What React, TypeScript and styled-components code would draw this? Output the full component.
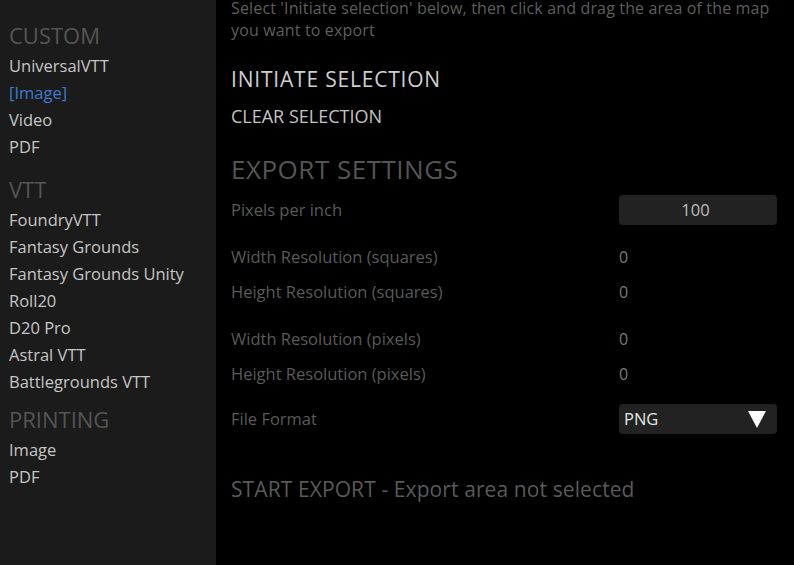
import * as React from "react";
import styled, { createGlobalStyle } from "styled-components";

const GlobalStyle = createGlobalStyle`
  html, body {
    margin: 0;
    padding: 0;
    background: #000;
  }
  body {
    font-family: "Open Sans", "Liberation Sans", sans-serif;
    overflow: hidden;
  }
`;

const Wrapper = styled.div`
  display: flex;
  width: 794px;
  height: 565px;
  overflow: hidden;
  background: #000;
`;

const Sidebar = styled.nav`
  width: 216px;
  flex: 0 0 216px;
  background: #1b1b1b;
  padding: 20px 0 0 9px;
  box-sizing: border-box;
`;

const GroupTitle = styled.div<{ $gap?: number }>`
  font-size: 22px;
  line-height: 31px;
  color: #555;
  margin-top: ${(p) => p.$gap ?? 0}px;
  padding-bottom: 1px;
`;

const NavItem = styled.div<{ $active?: boolean }>`
  font-size: 16.5px;
  line-height: 27px;
  color: ${(p) => (p.$active ? "#3a7bd0" : "#c6c6c6")};
`;

const Main = styled.main`
  flex: 1;
  padding: 0 17px 0 15px;
  display: flex;
  flex-direction: column;
`;

const Intro = styled.p`
  margin: -3px 0 0;
  font-size: 16px;
  line-height: 22px;
  letter-spacing: 0.15px;
  color: #5e5e5e;
`;

const ActionBig = styled.div`
  margin-top: 24px;
  font-size: 21px;
  line-height: 28px;
  letter-spacing: 0.8px;
  color: #cfcfcf;
`;

const ActionSmall = styled.div`
  margin-top: 11px;
  font-size: 18px;
  line-height: 24px;
  color: #c4c4c4;
`;

const SectionTitle = styled.h2`
  margin: 24px 0 6px;
  font-weight: 400;
  font-size: 26px;
  line-height: 34px;
  letter-spacing: 0.5px;
  color: #555;
`;

const SettingGroup = styled.div<{ $gap?: number }>`
  display: flex;
  flex-direction: column;
  margin-top: ${(p) => p.$gap ?? 0}px;
`;

const SettingRow = styled.div`
  display: grid;
  grid-template-columns: 388px 158px;
  align-items: center;
  height: 35px;
`;

const Label = styled.span`
  font-size: 16.5px;
  color: #5a5a5a;
`;

const Value = styled.span`
  font-size: 16px;
  color: #7a7a7a;
`;

const Field = styled.div<{ $center?: boolean }>`
  height: 30px;
  border-radius: 4px;
  background: #222;
  display: flex;
  align-items: center;
  justify-content: ${(p) => (p.$center ? "center" : "space-between")};
  padding: 0 10px 0 5px;
  font-size: 16.5px;
  color: ${(p) => (p.$center ? "#bdbdbd" : "#e6e6e6")};
`;

const StartExport = styled.div`
  margin-top: 39px;
  font-size: 21px;
  line-height: 28px;
  letter-spacing: 0.1px;
  color: #5a5a5a;
`;

const DownTriangle = () => (
  <svg width="20" height="20" viewBox="0 0 20 20">
    <polygon points="1,2 19,2 10,19" fill="#fff" />
  </svg>
);

export default function App() {
  return (
    <Wrapper>
      <GlobalStyle />
      <Sidebar>
        <GroupTitle>CUSTOM</GroupTitle>
        <NavItem>UniversalVTT</NavItem>
        <NavItem $active>[Image]</NavItem>
        <NavItem>Video</NavItem>
        <NavItem>PDF</NavItem>
        <GroupTitle $gap={14}>VTT</GroupTitle>
        <NavItem>FoundryVTT</NavItem>
        <NavItem>Fantasy Grounds</NavItem>
        <NavItem>Fantasy Grounds Unity</NavItem>
        <NavItem>Roll20</NavItem>
        <NavItem>D20 Pro</NavItem>
        <NavItem>Astral VTT</NavItem>
        <NavItem>Battlegrounds VTT</NavItem>
        <GroupTitle $gap={9}>PRINTING</GroupTitle>
        <NavItem>Image</NavItem>
        <NavItem>PDF</NavItem>
      </Sidebar>
      <Main>
        <Intro>
          Select 'Initiate selection' below, then click and drag the area of the map
          you want to export
        </Intro>
        <ActionBig>INITIATE SELECTION</ActionBig>
        <ActionSmall>CLEAR SELECTION</ActionSmall>
        <SectionTitle>EXPORT SETTINGS</SectionTitle>
        <SettingGroup>
          <SettingRow>
            <Label>Pixels per inch</Label>
            <Field $center>100</Field>
          </SettingRow>
        </SettingGroup>
        <SettingGroup $gap={12}>
          <SettingRow>
            <Label>Width Resolution (squares)</Label>
            <Value>0</Value>
          </SettingRow>
          <SettingRow>
            <Label>Height Resolution (squares)</Label>
            <Value>0</Value>
          </SettingRow>
        </SettingGroup>
        <SettingGroup $gap={12}>
          <SettingRow>
            <Label>Width Resolution (pixels)</Label>
            <Value>0</Value>
          </SettingRow>
          <SettingRow>
            <Label>Height Resolution (pixels)</Label>
            <Value>0</Value>
          </SettingRow>
        </SettingGroup>
        <SettingGroup $gap={10}>
          <SettingRow>
            <Label>File Format</Label>
            <Field>
              PNG
              <DownTriangle />
            </Field>
          </SettingRow>
        </SettingGroup>
        <StartExport>START EXPORT - Export area not selected</StartExport>
      </Main>
    </Wrapper>
  );
}
